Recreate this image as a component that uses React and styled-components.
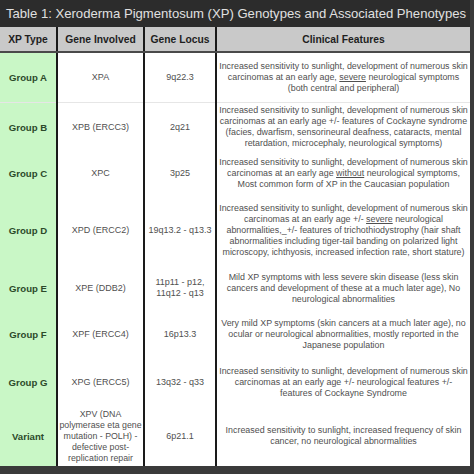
import React from "react";
import styled, { createGlobalStyle } from "styled-components";

const GlobalStyle = createGlobalStyle`
  html, body { margin: 0; padding: 0; background: #ffffff; }
  body { font-family: "Liberation Sans", Arial, sans-serif; }
`;

const U = styled.u`
    text-underline-offset: 1px;
`;

const rows = [
    {
        type: "Group A",
        gene: "XPA",
        locus: "9q22.3",
        h: 50,
        features: (
            <>
                Increased sensitivity to sunlight, development of numerous skin carcinomas at an
                early age, <U>severe</U> neurological symptoms (both central and peripheral)
            </>
        ),
    },
    {
        type: "Group B",
        gene: "XPB (ERCC3)",
        locus: "2q21",
        h: 50,
        features: (
            <>
                Increased sensitivity to sunlight, development of numerous skin carcinomas at an
                early age +/- features of Cockayne syndrome (facies, dwarfism, sensorineural
                deafness, cataracts, mental retardation, microcephaly, neurological symptoms)
            </>
        ),
    },
    {
        type: "Group C",
        gene: "XPC",
        locus: "3p25",
        h: 43,
        features: (
            <>
                Increased sensitivity to sunlight, development of numerous skin carcinomas at an
                early age <U>without</U> neurological symptoms, Most common form of XP in the
                Caucasian population
            </>
        ),
    },
    {
        type: "Group D",
        gene: "XPD (ERCC2)",
        locus: "19q13.2 - q13.3",
        h: 70,
        features: (
            <>
                Increased sensitivity to sunlight, development of numerous skin carcinomas at an
                early age +/- <U>severe</U> neurological abnormalities,_+/- features of
                trichothiodystrophy (hair shaft abnormalities including tiger-tail banding on
                polarized light microscopy, ichthyosis, increased infection rate, short stature)
            </>
        ),
    },
    {
        type: "Group E",
        gene: "XPE (DDB2)",
        locus: (
            <>
                11p11 - p12,
                <br />
                11q12 - q13
            </>
        ),
        h: 46,
        features: (
            <>
                Mild XP symptoms with less severe skin disease (less skin cancers and development
                of these at a much later age), No neurological abnormalities
            </>
        ),
    },
    {
        type: "Group F",
        gene: "XPF (ERCC4)",
        locus: "16p13.3",
        h: 47,
        features: (
            <>
                Very mild XP symptoms (skin cancers at a much later age), no ocular or
                neurological abnormalities, mostly reported in the Japanese population
            </>
        ),
    },
    {
        type: "Group G",
        gene: "XPG (ERCC5)",
        locus: "13q32 - q33",
        h: 48,
        features: (
            <>
                Increased sensitivity to sunlight, development of numerous skin carcinomas at an
                early age +/- neurological features +/-
                <br />
                features of Cockayne Syndrome
            </>
        ),
    },
    {
        type: "Variant",
        gene: "XPV (DNA polymerase eta gene mutation - POLH) - defective post-replication repair",
        locus: "6p21.1",
        h: 60,
        features: (
            <>
                Increased sensitivity to sunlight, increased frequency of skin cancer, no
                neurological abnormalities
            </>
        ),
    },
];

const Frame = styled.main`
    width: 474px;
    height: 474px;
    background: #3a3a3a;
    box-sizing: border-box;
    padding: 0 4px 7px 0;
    display: flex;
    flex-direction: column;
    overflow: hidden;
`;

const Title = styled.h1`
    margin: 0;
    height: 27px;
    flex: none;
    display: flex;
    align-items: center;
    padding-left: 6px;
    font-family: "Liberation Sans", Arial, sans-serif;
    font-weight: normal;
    font-size: 13.1px;
    color: #e0e0e0;
    background: #2c2c2c;
    white-space: nowrap;
`;

const Table = styled.table`
    width: 470px;
    border-collapse: collapse;
    table-layout: fixed;
    background: #ffffff;
    font-family: "Liberation Sans", Arial, sans-serif;
`;

const Th = styled.th`
    height: 24px;
    padding: 0;
    background: #c9c9c9;
    color: #1e1e1e;
    font-size: 10.3px;
    font-weight: bold;
    text-align: center;
    white-space: nowrap;
    border-left: 2px solid #1a1a1a;
    border-bottom: 2px solid #4a4a4a;
    &:first-child { border-left: none; }
`;

const Row = styled.tr`
    height: ${(p) => p.$h}px;
    & + & td { border-top: 1px solid #e6e6e6; }
`;

const TypeCell = styled.td`
    padding: 0;
    background: #c9f7c6;
    color: #2c4a2a;
    font-size: 9.6px;
    font-weight: bold;
    text-align: center;
    vertical-align: middle;
`;

const Cell = styled.td`
    padding: 0 ${(p) => (p.$narrow ? "0" : "2px")};
    border-left: 2px solid #1a1a1a;
    color: #505050;
    font-size: ${(p) => (p.$narrow ? "8.8px" : "9px")};
    line-height: 11px;
    text-align: center;
    vertical-align: middle;
`;

const Features = styled.td`
    padding: 0;
    border-left: 2px solid #1a1a1a;
    color: #505050;
    font-size: 8.9px;
    line-height: 11px;
    text-align: center;
    vertical-align: middle;
`;

const App = () => {
    return (
        <>
            <GlobalStyle />
            <Frame>
                <Title>Table 1: Xeroderma Pigmentosum (XP) Genotypes and Associated Phenotypes</Title>
                <Table>
                    <colgroup>
                        <col style={{ width: 57 }} />
                        <col style={{ width: 87 }} />
                        <col style={{ width: 72 }} />
                        <col />
                    </colgroup>
                    <thead>
                        <tr>
                            <Th>XP Type</Th>
                            <Th>Gene Involved</Th>
                            <Th>Gene Locus</Th>
                            <Th>Clinical Features</Th>
                        </tr>
                    </thead>
                    <tbody>
                        {rows.map((r, i) => (
                            <Row key={i} $h={r.h}>
                                <TypeCell>{r.type}</TypeCell>
                                <Cell $narrow={r.type === "Variant"}>{r.gene}</Cell>
                                <Cell>{r.locus}</Cell>
                                <Features>{r.features}</Features>
                            </Row>
                        ))}
                    </tbody>
                </Table>
            </Frame>
        </>
    );
};

export default App;
